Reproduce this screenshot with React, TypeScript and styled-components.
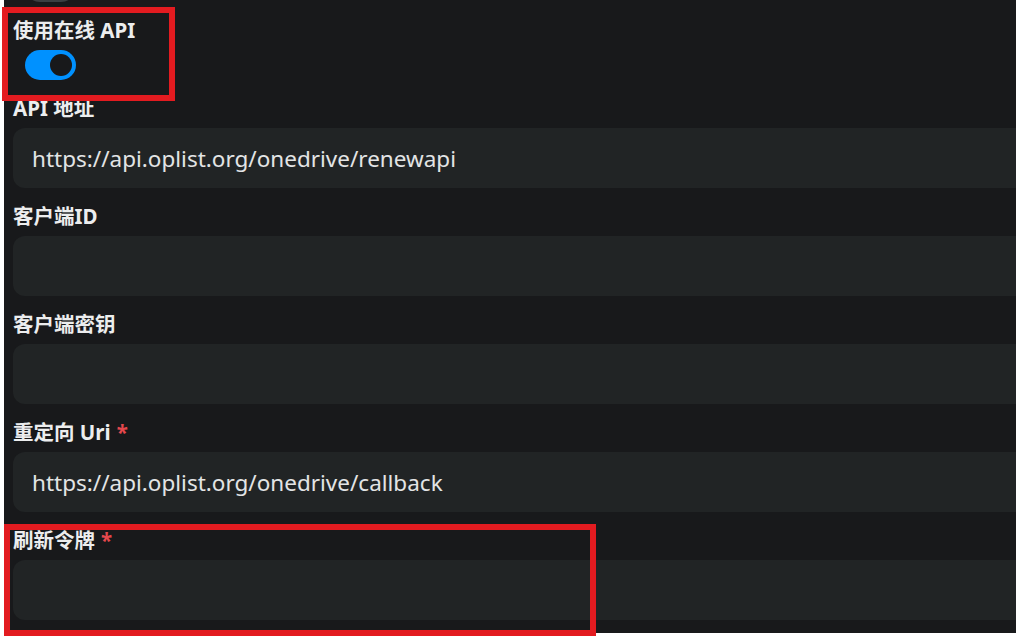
import styled, { createGlobalStyle } from "styled-components";

const GlobalStyle = createGlobalStyle`
  html, body {
    margin: 0;
    padding: 0;
    background: #ffffff;
    overflow: hidden;
  }
  body {
    font-family: "Noto Sans", "Noto Sans CJK SC", sans-serif;
  }
`;

const Page = styled.div`
  position: relative;
  height: 640px;
`;

const Panel = styled.div`
  margin-left: 4px;
  height: 633px;
  background: #18191b;
  overflow: hidden;
`;

const Form = styled.div`
  display: flex;
  flex-direction: column;
  gap: 16px;
  width: 1100px;
  padding-left: 9px;
  margin-top: -28px;
`;

const Field = styled.div`
  display: flex;
  flex-direction: column;
  align-items: flex-start;
  gap: 8px;
`;

const Label = styled.label`
  font-size: 20.5px;
  font-weight: 700;
  line-height: 24px;
  color: #ecedee;
  white-space: nowrap;
`;

const Required = styled.span`
  color: #e5484d;
  margin-left: 6px;
`;

const Input = styled.input`
  box-sizing: border-box;
  width: 100%;
  height: 60px;
  border: none;
  outline: none;
  border-radius: 12px;
  background: #212425;
  padding: 0 19px;
  font-family: "Noto Sans", "Noto Sans CJK SC", sans-serif;
  font-size: 22.5px;
  color: #e3e4e5;
`;

const Track = styled.span<{ on?: boolean }>`
  display: flex;
  align-items: center;
  justify-content: ${(p) => (p.on ? "flex-end" : "flex-start")};
  box-sizing: border-box;
  width: 51px;
  height: 30px;
  margin-left: 12px;
  padding: 0 4px;
  border-radius: 15px;
  background: ${(p) => (p.on ? "#0091ff" : "#3a3f42")};
`;

const Knob = styled.span`
  width: 22px;
  height: 22px;
  border-radius: 50%;
  background: #18191b;
`;

const Mark = styled.div`
  position: absolute;
  box-sizing: border-box;
  border: 6px solid #e31b20;
  pointer-events: none;
`;

type Item = { label: string; value?: string; required?: boolean };

const fields: Item[] = [
  { label: "API 地址", value: "https://api.oplist.org/onedrive/renewapi" },
  { label: "客户端ID" },
  { label: "客户端密钥" },
  { label: "重定向 Uri", value: "https://api.oplist.org/onedrive/callback", required: true },
  { label: "刷新令牌", required: true },
];

export default function App() {
  return (
    <Page>
      <GlobalStyle />
      <Panel>
        <Form>
          <Field>
            <Track>
              <Knob />
            </Track>
          </Field>
          <Field>
            <Label>使用在线 API</Label>
            <Track on>
              <Knob />
            </Track>
          </Field>
          {fields.map((f) => (
            <Field key={f.label}>
              <Label>
                {f.label}
                {f.required && <Required>*</Required>}
              </Label>
              <Input defaultValue={f.value ?? ""} />
            </Field>
          ))}
        </Form>
      </Panel>
      <Mark style={{ left: 2, top: 7, width: 173, height: 94 }} />
      <Mark style={{ left: 4, top: 524, width: 592, height: 112 }} />
    </Page>
  );
}
